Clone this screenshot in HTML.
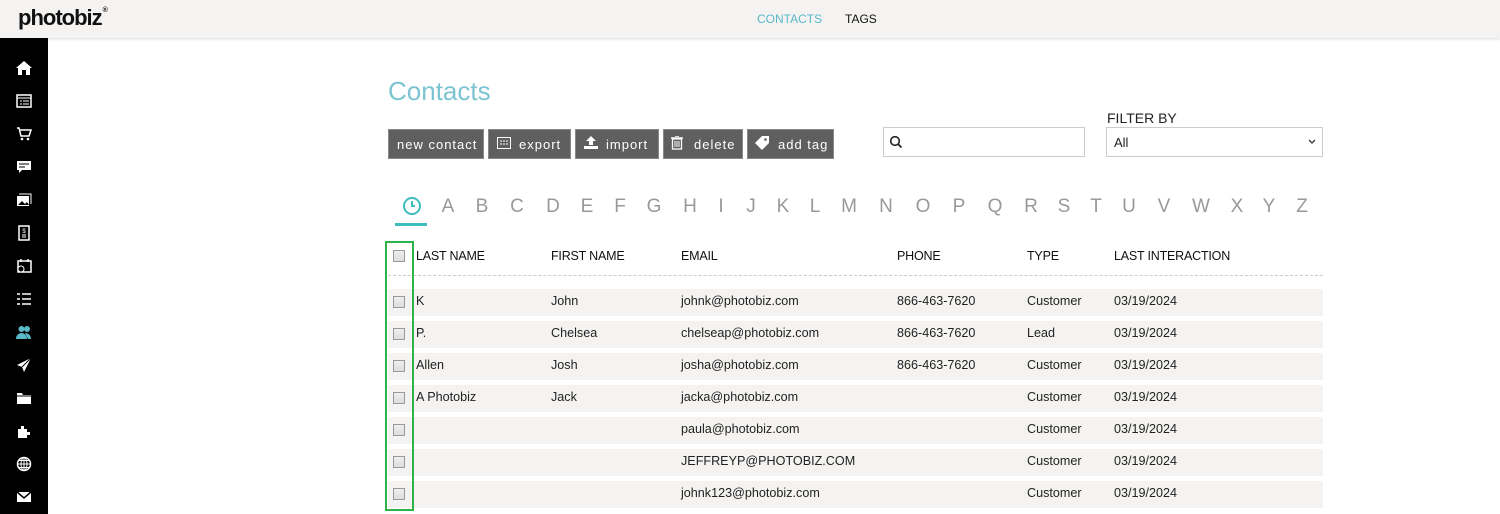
<!DOCTYPE html>
<html><head><meta charset="utf-8"><style>
*{margin:0;padding:0;box-sizing:border-box}
body{width:1500px;height:514px;overflow:hidden;background:#fff;font-family:"Liberation Sans",sans-serif;position:relative;color:#222}
.top{position:absolute;left:0;top:0;width:1500px;height:38px;background:#f4f3f1;box-shadow:0 1px 3px rgba(0,0,0,.15)}
.logo{position:absolute;left:18px;top:5px;font-size:22px;font-weight:bold;color:#111;letter-spacing:-1px}
.logo sup{font-size:7px;vertical-align:top;position:relative;top:2px;left:1px}
.nav{position:absolute;top:12px;font-size:12px}
.side{position:absolute;left:0;top:38px;width:48px;height:476px;background:#000}
.ic{position:absolute;left:16px;width:16px;height:16px}
.a{position:absolute}
.btn{position:absolute;top:129px;height:30px;background:#5f5f5f;color:#fff;font-size:13px;letter-spacing:1px;line-height:30px;padding-left:8px;border:1px solid #888}
.box{position:absolute;border:1px solid #ccc;background:#fff}
.L{position:absolute;top:196px;font-size:19px;color:#999;transform:translateX(-50%)}
.h{position:absolute;top:249px;font-size:12.5px;color:#111;letter-spacing:-0.2px}
.row{position:absolute;left:388px;width:935px;height:27px;background:#f4f3f1}
.c{position:absolute;font-size:12.6px;color:#222;margin-top:-1px}
.cb{position:absolute;left:393px;width:12px;height:12px;border:1px solid #999;background:linear-gradient(#eee,#ddd)}
</style></head><body>
<div class="top">
<div class="logo">photobiz<sup>®</sup></div>
<div class="nav" style="left:757px;color:#5bb8c9">CONTACTS</div>
<div class="nav" style="left:845px;color:#111">TAGS</div>
</div>
<div class="side">
<svg class="ic" style="top:22px" viewBox="0 0 16 16"><path d="M8 1L0 8h2v7h4v-5h4v5h4V8h2z" fill="#fff"/></svg>
<svg class="ic" style="top:55px" viewBox="0 0 16 16"><rect x="1" y="2" width="14" height="12" fill="none" stroke="#fff" stroke-width="1.5"/><path d="M1 5h14M4 8h2M7 8h6M4 11h2M7 11h6" stroke="#fff"/></svg>
<svg class="ic" style="top:88px" viewBox="0 0 16 16"><path d="M1 2h2l2 8h8l2-6H4" fill="none" stroke="#fff" stroke-width="1.5"/><circle cx="6" cy="13" r="1.3" fill="#fff"/><circle cx="12" cy="13" r="1.3" fill="#fff"/></svg>
<svg class="ic" style="top:121px" viewBox="0 0 16 16"><path d="M1 2h14v9H6l-3 3v-3H1z" fill="#fff"/><path d="M3 5h10M3 8h6" stroke="#000"/></svg>
<svg class="ic" style="top:154px" viewBox="0 0 16 16"><rect x="1" y="4" width="12" height="10" fill="#fff"/><path d="M3 2h12v10" fill="none" stroke="#fff"/><path d="M2 13l4-4 3 3 2-2 2 3z" fill="#000"/></svg>
<svg class="ic" style="top:187px" viewBox="0 0 16 16"><rect x="3" y="1" width="10" height="14" fill="none" stroke="#fff" stroke-width="1.5"/><path d="M6 10h4M6 12h4" stroke="#fff"/><text x="8" y="8" font-size="6" fill="#fff" text-anchor="middle">$</text></svg>
<svg class="ic" style="top:220px" viewBox="0 0 16 16"><rect x="2" y="3" width="13" height="11" fill="none" stroke="#fff" stroke-width="1.5"/><path d="M5 1v3M12 1v3" stroke="#fff" stroke-width="1.5"/><circle cx="5" cy="11" r="3" fill="#000" stroke="#fff"/></svg>
<svg class="ic" style="top:253px" viewBox="0 0 16 16"><path d="M1 3h3M6 3h9M1 8h3M6 8h9M1 13h3M6 13h9" stroke="#fff" stroke-width="1.6"/></svg>
<svg class="ic" style="top:286px" viewBox="0 0 16 16"><circle cx="5.5" cy="5" r="3" fill="#5bb8c9"/><circle cx="11" cy="5" r="3" fill="#5bb8c9"/><path d="M0 15c0-4 3-6 5.5-6s5.5 2 5.5 6zM9 9c3 0 6 2 6 6h-3" fill="#5bb8c9"/></svg>
<svg class="ic" style="top:319px" viewBox="0 0 16 16"><path d="M15 1L1 8l5 2 2 5z" fill="#fff"/><path d="M15 1L6 10" stroke="#000"/></svg>
<svg class="ic" style="top:352px" viewBox="0 0 16 16"><path d="M1 3h5l1 2h8v9H1z" fill="#fff"/><path d="M1 6h14" stroke="#000"/></svg>
<svg class="ic" style="top:385px" viewBox="0 0 16 16"><path d="M2 6h3V3h3v3h3v3h3v3h-3v3H2z" fill="#fff"/></svg>
<svg class="ic" style="top:418px" viewBox="0 0 16 16"><circle cx="8" cy="8" r="6.5" fill="none" stroke="#fff" stroke-width="1.5"/><path d="M1.5 8h13M8 1.5v13M3 4.5h10M3 11.5h10" stroke="#fff"/><ellipse cx="8" cy="8" rx="3" ry="6.5" fill="none" stroke="#fff"/></svg>
<svg class="ic" style="top:451px" viewBox="0 0 16 16"><rect x="1" y="3" width="14" height="10" fill="#fff"/><path d="M1 3l7 6 7-6" fill="none" stroke="#000" stroke-width="1.5"/></svg>
</div>

<div class="a" style="left:388px;top:76px;font-size:26px;color:#7cc4d2">Contacts</div>

<div class="btn" style="left:388px;width:96px">new contact</div>
<div class="btn" style="left:488px;width:83px;padding-left:30px">export</div>
<div class="btn" style="left:575px;width:84px;padding-left:30px">import</div>
<div class="btn" style="left:663px;width:80px;padding-left:30px">delete</div>
<div class="btn" style="left:747px;width:87px;padding-left:30px">add tag</div>
<svg class="a" style="left:497px;top:137px" width="14" height="12" viewBox="0 0 14 12"><rect x="0.5" y="0.5" width="13" height="11" fill="none" stroke="#fff"/><path d="M3 4h2M6 4h2M9 4h2M3 7h2M6 7h2M9 7h2" stroke="#fff"/></svg>
<svg class="a" style="left:584px;top:136px" width="14" height="14" viewBox="0 0 14 14"><path d="M7 0l5 5H9v4H5V5H2z" fill="#fff"/><rect x="0" y="10" width="14" height="3" fill="#fff"/></svg>
<svg class="a" style="left:671px;top:136px" width="12" height="14" viewBox="0 0 12 14"><path d="M0 2h12M4 0h4" stroke="#fff" stroke-width="1.5"/><rect x="1.5" y="3" width="9" height="10" fill="none" stroke="#fff" stroke-width="1.3"/><path d="M4 5v6M6 5v6M8 5v6" stroke="#fff"/></svg>
<svg class="a" style="left:755px;top:136px" width="14" height="14" viewBox="0 0 14 14"><path d="M7 0h7v7l-7 7-7-7z" fill="#fff"/><circle cx="10.5" cy="3.5" r="1.3" fill="#5f5f5f"/></svg>

<div class="box" style="left:883px;top:127px;width:202px;height:30px"></div>
<svg class="a" style="left:889px;top:135px" width="14" height="14" viewBox="0 0 14 14"><circle cx="6" cy="6" r="4.3" fill="none" stroke="#222" stroke-width="1.6"/><path d="M9 9l3.5 3.5" stroke="#222" stroke-width="1.8"/></svg>
<div class="a" style="left:1107px;top:110px;font-size:14px;color:#222">FILTER BY</div>
<div class="box" style="left:1106px;top:127px;width:217px;height:30px"></div>
<div class="a" style="left:1114px;top:135px;font-size:13px">All</div>
<svg class="a" style="left:1308px;top:139px" width="8" height="6" viewBox="0 0 8 6"><path d="M1 1l3 3 3-3" fill="none" stroke="#333" stroke-width="1.3"/></svg>

<svg class="a" style="left:402px;top:196px" width="20" height="20" viewBox="0 0 20 20"><circle cx="10" cy="10" r="8" fill="none" stroke="#3dbdbd" stroke-width="2"/><path d="M10 5v5h3" fill="none" stroke="#3dbdbd" stroke-width="2"/></svg>
<div class="a" style="left:395px;top:223px;width:32px;height:3px;background:#3dbdbd"></div>
<div class="L" style="left:448px">A</div><div class="L" style="left:482px">B</div><div class="L" style="left:517px">C</div><div class="L" style="left:553px">D</div><div class="L" style="left:587px">E</div><div class="L" style="left:620px">F</div><div class="L" style="left:654px">G</div><div class="L" style="left:690px">H</div><div class="L" style="left:721px">I</div><div class="L" style="left:751px">J</div><div class="L" style="left:783px">K</div><div class="L" style="left:815px">L</div><div class="L" style="left:849px">M</div><div class="L" style="left:886px">N</div><div class="L" style="left:923px">O</div><div class="L" style="left:959px">P</div><div class="L" style="left:995px">Q</div><div class="L" style="left:1031px">R</div><div class="L" style="left:1064px">S</div><div class="L" style="left:1096px">T</div><div class="L" style="left:1129px">U</div><div class="L" style="left:1164px">V</div><div class="L" style="left:1201px">W</div><div class="L" style="left:1237px">X</div><div class="L" style="left:1269px">Y</div><div class="L" style="left:1302px">Z</div>

<div class="cb" style="top:250px"></div>
<div class="h" style="left:416px">LAST NAME</div><div class="h" style="left:551px">FIRST NAME</div><div class="h" style="left:681px">EMAIL</div><div class="h" style="left:897px">PHONE</div><div class="h" style="left:1027px">TYPE</div><div class="h" style="left:1114px">LAST INTERACTION</div>
<div class="a" style="left:388px;top:275px;width:935px;border-top:1px dashed #ccc"></div>

<div class="row" style="top:289px"></div><div class="row" style="top:321px"></div><div class="row" style="top:353px"></div><div class="row" style="top:385px"></div><div class="row" style="top:417px"></div><div class="row" style="top:449px"></div><div class="row" style="top:481px"></div>

<div class="cb" style="top:296px"></div><div class="c" style="left:416px;top:295px">K</div><div class="c" style="left:551px;top:295px">John</div><div class="c" style="left:681px;top:295px">johnk@photobiz.com</div><div class="c" style="left:897px;top:295px">866-463-7620</div><div class="c" style="left:1027px;top:295px">Customer</div><div class="c" style="left:1114px;top:295px">03/19/2024</div>
<div class="cb" style="top:328px"></div><div class="c" style="left:416px;top:327px">P.</div><div class="c" style="left:551px;top:327px">Chelsea</div><div class="c" style="left:681px;top:327px">chelseap@photobiz.com</div><div class="c" style="left:897px;top:327px">866-463-7620</div><div class="c" style="left:1027px;top:327px">Lead</div><div class="c" style="left:1114px;top:327px">03/19/2024</div>
<div class="cb" style="top:360px"></div><div class="c" style="left:416px;top:359px">Allen</div><div class="c" style="left:551px;top:359px">Josh</div><div class="c" style="left:681px;top:359px">josha@photobiz.com</div><div class="c" style="left:897px;top:359px">866-463-7620</div><div class="c" style="left:1027px;top:359px">Customer</div><div class="c" style="left:1114px;top:359px">03/19/2024</div>
<div class="cb" style="top:392px"></div><div class="c" style="left:416px;top:391px">A Photobiz</div><div class="c" style="left:551px;top:391px">Jack</div><div class="c" style="left:681px;top:391px">jacka@photobiz.com</div><div class="c" style="left:1027px;top:391px">Customer</div><div class="c" style="left:1114px;top:391px">03/19/2024</div>
<div class="cb" style="top:424px"></div><div class="c" style="left:681px;top:423px">paula@photobiz.com</div><div class="c" style="left:1027px;top:423px">Customer</div><div class="c" style="left:1114px;top:423px">03/19/2024</div>
<div class="cb" style="top:456px"></div><div class="c" style="left:681px;top:455px">JEFFREYP@PHOTOBIZ.COM</div><div class="c" style="left:1027px;top:455px">Customer</div><div class="c" style="left:1114px;top:455px">03/19/2024</div>
<div class="cb" style="top:488px"></div><div class="c" style="left:681px;top:487px">johnk123@photobiz.com</div><div class="c" style="left:1027px;top:487px">Customer</div><div class="c" style="left:1114px;top:487px">03/19/2024</div>

<div class="a" style="left:385px;top:241px;width:29px;height:270px;border:2px solid #2db34a"></div>
</body></html>
